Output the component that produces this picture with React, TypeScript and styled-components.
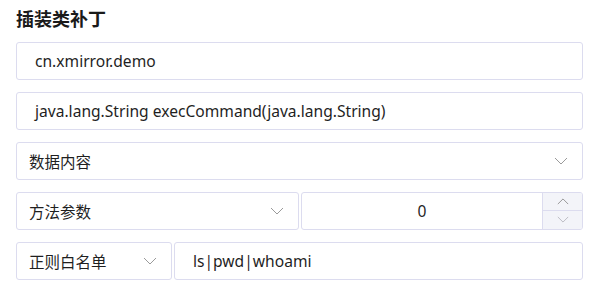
import React from "react";
import styled, { createGlobalStyle } from "styled-components";

const Global = createGlobalStyle`
  html, body { margin: 0; padding: 0; background: #ffffff; }
  body { font-family: "Noto Sans", "Noto Sans CJK SC", sans-serif; color: #1f1f1f; }
`;

const Page = styled.div`
  width: 600px;
  height: 299px;
  box-sizing: border-box;
  padding: 5px 17px 0 16px;
  display: flex;
  flex-direction: column;
`;

const Title = styled.h2`
  margin: 0 0 11px 0;
  font-family: "Noto Sans CJK SC", sans-serif;
  font-size: 18px;
  font-weight: 700;
  line-height: 26px;
  color: #1a1a1a;
`;

const Stack = styled.div`
  display: flex;
  flex-direction: column;
  gap: 12.5px;
`;

const Row = styled.div`
  display: flex;
  gap: 2px;
`;

const Box = styled.div<{ $w?: number; $pad?: number }>`
  box-sizing: border-box;
  height: 37.5px;
  ${(p) => (p.$w ? `width: ${p.$w}px; flex: none;` : "flex: 1 0 auto;")}
  border: 1.5px solid #dcdcef;
  border-radius: 3px;
  background: #fff;
  display: flex;
  align-items: center;
  padding-left: ${(p) => p.$pad ?? 18}px;
  padding-right: 14px;
  font-size: 15.6px;
  color: #1f1f1f;
  white-space: nowrap;
  overflow: hidden;
`;

const CjkText = styled.span`
  font-family: "Noto Sans CJK SC", sans-serif;
  font-size: 15.5px;
  flex: 1;
`;

const Chevron = ({ color = "#9a9a9a", up = false }: { color?: string; up?: boolean }) => (
  <svg width="14" height="8" viewBox="0 0 14 8" fill="none">
    <path d={up ? "M1 7 L7 1 L13 7" : "M1 1 L7 7 L13 1"} stroke={color} strokeWidth="1" />
  </svg>
);

const NumberBox = styled.div`
  flex: 1 0 auto;
  box-sizing: border-box;
  height: 37.5px;
  border: 1.5px solid #dcdcef;
  border-radius: 3px;
  display: flex;
  overflow: hidden;
`;

const NumberValue = styled.div`
  flex: 1;
  display: flex;
  align-items: center;
  justify-content: center;
  font-size: 15.6px;
  color: #1f1f1f;
`;

const Stepper = styled.div`
  width: 39px;
  border-left: 1.5px solid #dcdcef;
  background: #f3f4f9;
  display: flex;
  flex-direction: column;
`;

const StepBtn = styled.div<{ $top?: boolean }>`
  flex: 1;
  display: flex;
  align-items: center;
  justify-content: center;
  ${(p) => (p.$top ? "border-bottom: 1.5px solid #dcdcef;" : "")}
  svg { width: 12px; height: 7px; }
`;

export default function App() {
  return (
    <>
      <Global />
      <Page>
        <Title>插装类补丁</Title>
        <Stack>
          <Box>cn.xmirror.demo</Box>
          <Box>java.lang.String execCommand(java.lang.String)</Box>
          <Box $pad={12}>
            <CjkText>数据内容</CjkText>
            <Chevron />
          </Box>
          <Row>
            <Box $pad={12} $w={283}>
              <CjkText>方法参数</CjkText>
              <Chevron />
            </Box>
            <NumberBox>
              <NumberValue>0</NumberValue>
              <Stepper>
                <StepBtn $top>
                  <Chevron up color="#8a8a8a" />
                </StepBtn>
                <StepBtn>
                  <Chevron color="#b4b4bc" />
                </StepBtn>
              </Stepper>
            </NumberBox>
          </Row>
          <Row>
            <Box $pad={12} $w={156}>
              <CjkText>正则白名单</CjkText>
              <Chevron />
            </Box>
            <Box $pad={18}>ls|pwd|whoami</Box>
          </Row>
        </Stack>
      </Page>
    </>
  );
}
